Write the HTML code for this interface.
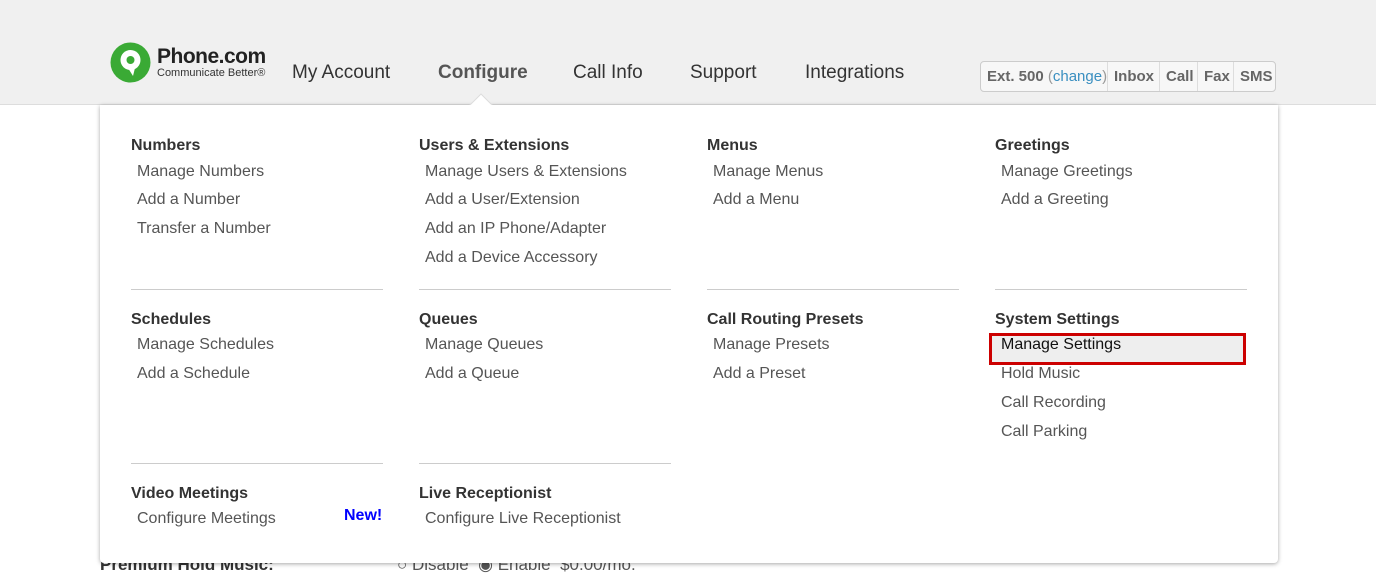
<!DOCTYPE html>
<html><head><meta charset="utf-8"><style>
*{margin:0;padding:0;box-sizing:border-box}
body{width:1376px;height:568px;overflow:hidden;background:#fff;font-family:"Liberation Sans",sans-serif;position:relative;color:#444}
.hdr{position:absolute;left:0;top:0;width:1376px;height:105px;background:#f0f0f0;border-bottom:1px solid #ddd}
.nav{position:absolute;top:62px;font-size:19px;color:#333}
.panel{position:absolute;left:100px;top:105px;width:1178px;height:458px;background:#fff;box-shadow:0 1px 4px rgba(0,0,0,.35);border-radius:0 0 4px 4px}
.h{position:absolute;font-size:16px;font-weight:bold;color:#333}
.i{position:absolute;font-size:16px;color:#555}
.d{position:absolute;height:1px;width:252px;background:#ccc}
.tb{position:absolute;left:980px;top:61px;width:296px;height:31px;border:1px solid #ccc;border-radius:4px;background:#f7f7f7;display:flex;font-size:15px;font-weight:bold;color:#666;white-space:nowrap}
.tb>div{border-right:1px solid #ddd;line-height:29px;padding:0 6px}
.n{font-weight:normal}
</style></head><body>
<div style="position:absolute;left:100px;top:555px;font-size:17px;font-weight:bold;color:#333">Premium Hold Music:</div>
<div style="position:absolute;left:397px;top:555px;font-size:17px;color:#555">○ Disable &nbsp;◉ Enable &nbsp;$0.00/mo.</div>
<div class="hdr"></div>
<svg style="position:absolute;left:110px;top:42px" width="41" height="41" viewBox="0 0 41 41"><circle cx="20.5" cy="20.5" r="20" fill="#3aaa35"/><circle cx="20.5" cy="18" r="10" fill="#fff"/><circle cx="20.5" cy="18" r="4" fill="#3aaa35"/><path d="M18 26 L23 34 L25 26Z" fill="#fff"/></svg>
<div style="position:absolute;left:157px;top:45px;font-size:21px;font-weight:bold;color:#222;letter-spacing:-.5px">Phone.com</div>
<div style="position:absolute;left:157px;top:67px;font-size:11px;color:#333">Communicate Better®</div>
<div class="nav" style="left:292px">My Account</div>
<div class="nav" style="left:438px;font-weight:bold;color:#555">Configure</div>
<div class="nav" style="left:573px">Call Info</div>
<div class="nav" style="left:690px">Support</div>
<div class="nav" style="left:805px">Integrations</div>
<div class="tb"><div style="width:127px">Ext. 500 <span class="n" style="color:#999">(</span><span class="n" style="color:#3a8fc0">change</span><span class="n" style="color:#999">)</span></div><div style="width:52px">Inbox</div><div style="width:38px">Call</div><div style="width:36px">Fax</div><div style="border:0">SMS</div></div>
<div class="panel"></div>
<svg style="position:absolute;left:469px;top:93px" width="24" height="13"><path d="M0 13 L12 1 L24 13Z" fill="#fff" stroke="#ddd"/><rect x="0" y="12" width="24" height="2" fill="#fff"/></svg>
<div style="position:absolute;left:989px;top:333px;width:257px;height:32px;border:3px solid #c00;background:#eee"></div>

<div class="h" style="left:131px;top:137px">Numbers</div>
<div class="i" style="left:137px;top:163px">Manage Numbers</div>
<div class="i" style="left:137px;top:191px">Add a Number</div>
<div class="i" style="left:137px;top:220px">Transfer a Number</div>

<div class="h" style="left:419px;top:137px">Users &amp; Extensions</div>
<div class="i" style="left:425px;top:163px">Manage Users &amp; Extensions</div>
<div class="i" style="left:425px;top:191px">Add a User/Extension</div>
<div class="i" style="left:425px;top:220px">Add an IP Phone/Adapter</div>
<div class="i" style="left:425px;top:249px">Add a Device Accessory</div>

<div class="h" style="left:707px;top:137px">Menus</div>
<div class="i" style="left:713px;top:163px">Manage Menus</div>
<div class="i" style="left:713px;top:191px">Add a Menu</div>

<div class="h" style="left:995px;top:137px">Greetings</div>
<div class="i" style="left:1001px;top:163px">Manage Greetings</div>
<div class="i" style="left:1001px;top:191px">Add a Greeting</div>

<div class="d" style="left:131px;top:289px"></div><div class="d" style="left:419px;top:289px"></div><div class="d" style="left:707px;top:289px"></div><div class="d" style="left:995px;top:289px"></div>

<div class="h" style="left:131px;top:311px">Schedules</div>
<div class="i" style="left:137px;top:336px">Manage Schedules</div>
<div class="i" style="left:137px;top:365px">Add a Schedule</div>

<div class="h" style="left:419px;top:311px">Queues</div>
<div class="i" style="left:425px;top:336px">Manage Queues</div>
<div class="i" style="left:425px;top:365px">Add a Queue</div>

<div class="h" style="left:707px;top:311px">Call Routing Presets</div>
<div class="i" style="left:713px;top:336px">Manage Presets</div>
<div class="i" style="left:713px;top:365px">Add a Preset</div>

<div class="h" style="left:995px;top:311px">System Settings</div>
<div class="i" style="left:1001px;top:336px;color:#111">Manage Settings</div>
<div class="i" style="left:1001px;top:365px">Hold Music</div>
<div class="i" style="left:1001px;top:394px">Call Recording</div>
<div class="i" style="left:1001px;top:423px">Call Parking</div>

<div class="d" style="left:131px;top:463px"></div><div class="d" style="left:419px;top:463px"></div>

<div class="h" style="left:131px;top:485px">Video Meetings</div>
<div class="i" style="left:137px;top:510px">Configure Meetings</div>
<div style="position:absolute;left:344px;top:507px;font-size:16px;font-weight:bold;color:#00f">New!</div>
<div class="h" style="left:419px;top:485px">Live Receptionist</div>
<div class="i" style="left:425px;top:510px">Configure Live Receptionist</div>
</body></html>
